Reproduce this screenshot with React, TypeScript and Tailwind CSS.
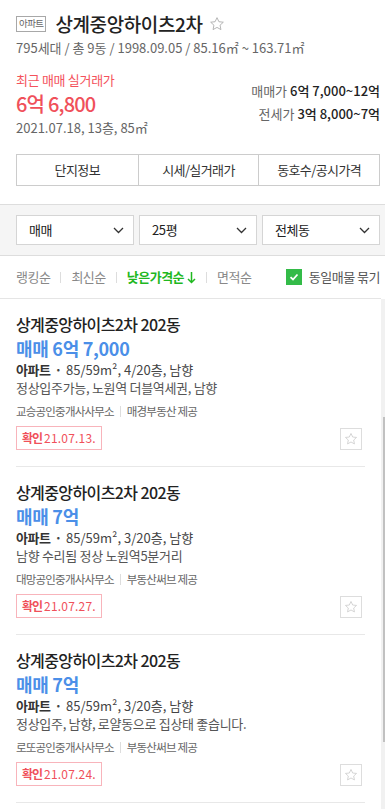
import React from "react";

const FONT = { fontFamily: '"Noto Sans CJK KR", "Noto Sans", sans-serif' };

function Star({ size = 15, color = "#aaa" }: { size?: number; color?: string }) {
  return (
    <svg width={size} height={size} viewBox="0 0 24 24" fill="none">
      <polygon
        points="12,2.5 14.9,8.6 21.5,9.3 16.6,13.8 17.9,20.4 12,17.1 6.1,20.4 7.4,13.8 2.5,9.3 9.1,8.6"
        stroke={color}
        strokeWidth="1.3"
        strokeLinejoin="round"
      />
    </svg>
  );
}

function Chevron() {
  return (
    <svg width="11" height="7" viewBox="0 0 11 7" fill="none">
      <path d="M1 1 L5.5 5.5 L10 1" stroke="#333" strokeWidth="1.3" />
    </svg>
  );
}

type Item = {
  price: string;
  spec: string;
  desc: string;
  agent: string;
  source: string;
  date: string;
};

const items: Item[] = [
  {
    price: "매매 6억 7,000",
    spec: "85/59m², 4/20층, 남향",
    desc: "정상입주가능, 노원역 더블역세권, 남향",
    agent: "교승공인중개사사무소",
    source: "매경부동산 제공",
    date: "21.07.13.",
  },
  {
    price: "매매 7억",
    spec: "85/59m², 3/20층, 남향",
    desc: "남향 수리됨 정상 노원역5분거리",
    agent: "대망공인중개사사무소",
    source: "부동산써브 제공",
    date: "21.07.27.",
  },
  {
    price: "매매 7억",
    spec: "85/59m², 3/20층, 남향",
    desc: "정상입주, 남향, 로얄동으로 집상태 좋습니다.",
    agent: "로또공인중개사사무소",
    source: "부동산써브 제공",
    date: "21.07.24.",
  },
];

function Card({ it }: { it: Item }) {
  return (
    <div className="px-4">
      <div className="pt-[15px] pb-[16px] border-b border-[#e8e8e8]">
        <div className="text-[16px] leading-[20px] font-medium tracking-[-0.6px] text-[#222]">
          상계중앙하이츠2차 202동
        </div>
        <div className="mt-[3px] text-[18px] leading-[22px] font-bold tracking-[-0.3px] text-[#4b8fe8]">
          {it.price}
        </div>
        <div className="mt-[2px] flex text-[13px] leading-[18px] text-[#444]">
          <span className="font-bold tracking-[-0.5px] text-[#333]">아파트</span>
          <span className="font-bold mx-[4px]">·</span>
          <span>{it.spec}</span>
        </div>
        <div className="text-[13px] leading-[18px] tracking-[-0.3px] text-[#555]">{it.desc}</div>
        <div className="mt-[5px] flex items-center text-[11.5px] leading-[18px] tracking-[-0.8px] text-[#666]">
          <span>{it.agent}</span>
          <span className="mx-[6px] h-[11px] w-px bg-[#ddd]" />
          <span>{it.source}</span>
        </div>
        <div className="mt-[6px] flex items-end justify-between">
          <div className="flex h-[24px] items-center gap-[2px] border border-[#f8b4bb] px-[5px] text-[12px] text-[#f0505a]">
            <span className="font-bold tracking-[-1px]">확인</span>
            <span className="tracking-[0.2px]">{it.date}</span>
          </div>
          <div className="mr-[3px] flex h-[22px] w-[22px] items-center justify-center border border-[#ddd]">
            <Star size={14} color="#c8c8c8" />
          </div>
        </div>
      </div>
    </div>
  );
}

export default function App() {
  return (
    <div className="h-[809px] w-[385px] overflow-hidden bg-white" style={FONT}>
      {/* Header */}
      <div className="pl-4 pr-[5px] pt-[14px]">
        <div className="flex h-[20px] items-center">
          <span className="flex h-[16px] items-center border border-[#a8a8a8] px-[2px] text-[9.5px] leading-none tracking-[-0.6px] text-[#666]">
            아파트
          </span>
          <span className="ml-[9px] text-[19px] font-medium leading-[20px] tracking-[-0.4px] text-[#222]">
            상계중앙하이츠2차
          </span>
          <span className="ml-[6px] flex items-center">
            <Star size={16} color="#aaa" />
          </span>
        </div>
        <div className="mt-[5px] text-[13px] leading-[18px] tracking-[0px] text-[#666]">
          795세대 / 총 9동 / 1998.09.05 / 85.16㎡ ~ 163.71㎡
        </div>
        <div className="mt-[14px] flex items-start justify-between">
          <div>
            <div className="text-[13px] leading-[18px] tracking-[-0.3px] text-[#f4525c]">최근 매매 실거래가</div>
            <div className="mt-[2px] text-[20px] font-medium leading-[26px] tracking-[-0.8px] text-[#f0505a]">
              6억 6,800
            </div>
            <div className="mt-[2px] text-[13px] leading-[18px] tracking-[0px] text-[#666]">
              2021.07.18, 13층, 85㎡
            </div>
          </div>
          <div className="mt-[11px] flex flex-col items-end gap-[5px] text-[13px] leading-[18px] tracking-[0px]">
            <div>
              <span className="text-[#666]">매매가 </span>
              <span className="font-medium text-[#222]">6억 7,000~12억</span>
            </div>
            <div>
              <span className="text-[#666]">전세가 </span>
              <span className="font-medium text-[#222]">3억 8,000~7억</span>
            </div>
          </div>
        </div>
        <div className="mt-[17px] grid h-[32px] grid-cols-3 border border-[#ccc] text-[13px] tracking-[-0.6px] text-[#333]">
          <div className="flex items-center justify-center">단지정보</div>
          <div className="flex items-center justify-center border-l border-[#ccc]">시세/실거래가</div>
          <div className="flex items-center justify-center border-l border-[#ccc]">동호수/공시가격</div>
        </div>
      </div>

      {/* Filter area */}
      <div className="mt-[18px] border-y border-[#ddd] bg-[#f5f5f5] pb-[10px] pl-4 pr-[5px] pt-[10px]">
        <div className="grid grid-cols-3 gap-[5px]">
          {["매매", "25평", "전체동"].map((t) => (
            <div
              key={t}
              className="flex h-[30px] items-center justify-between border border-[#d5d5d5] bg-white pl-[12px] pr-[9px] text-[13px] tracking-[-0.4px] text-[#222]"
            >
              <span>{t}</span>
              <Chevron />
            </div>
          ))}
        </div>
      </div>

      {/* Sort row */}
      <div className="flex h-[43px] w-[381px] items-center justify-between border-b border-[#e5e5e5] pl-4 pr-[1px] text-[13px] tracking-[-0.5px]">
        <div className="flex items-center">
          <span className="text-[#888]">랭킹순</span>
          <span className="mx-[10px] h-[11px] w-px bg-[#ddd]" />
          <span className="text-[#888]">최신순</span>
          <span className="mx-[10px] h-[11px] w-px bg-[#ddd]" />
          <span className="flex items-center font-bold text-[#1fb81f]">
            낮은가격순
            <svg className="ml-[3px]" width="9" height="13" viewBox="0 0 9 13" fill="none">
              <path d="M4.5 1 V11.5 M1 8 L4.5 11.5 L8 8" stroke="#1fb81f" strokeWidth="1.5" />
            </svg>
          </span>
          <span className="mx-[10px] h-[11px] w-px bg-[#ddd]" />
          <span className="text-[#888]">면적순</span>
        </div>
        <div className="flex items-center">
          <span className="flex h-[16px] w-[16px] items-center justify-center bg-[#33bb48]">
            <svg width="12" height="12" viewBox="0 0 12 12" fill="none">
              <path d="M2.5 6.2 L5 8.5 L9.5 3.5" stroke="white" strokeWidth="1.8" />
            </svg>
          </span>
          <span className="ml-[7px] text-[#555]">동일매물 묶기</span>
        </div>
      </div>

      {/* List */}
      <div className="flex">
        <div className="w-[381px]">
          {items.map((it, i) => (
            <Card key={i} it={it} />
          ))}
        </div>
        <div className="flex h-[510px] w-[4px] flex-col bg-[#f1f1f1]">
          <div className="h-[118px]" />
          <div className="ml-auto h-[325px] w-[2px] bg-[#c1c1c1]" />
        </div>
      </div>
    </div>
  );
}
